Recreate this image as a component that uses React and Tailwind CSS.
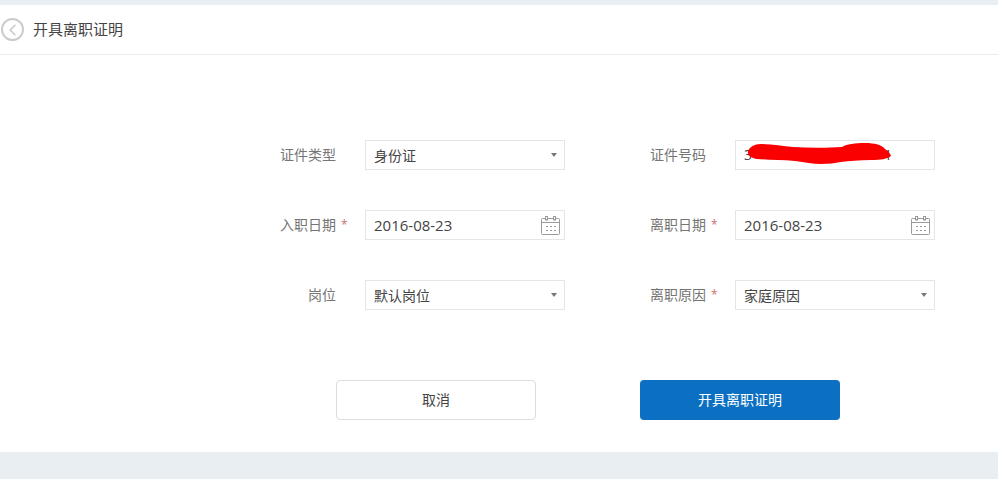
import { ChevronLeft } from 'lucide-react';

const font = { fontFamily: '"Open Sans", "Noto Sans CJK SC", sans-serif' };

function Label({ text, required }) {
  return (
    <div className="flex w-[85px] shrink-0 items-center text-sm text-[#757575]">
      <span className="w-[56px] text-right">{text}</span>
      {required && <span className="ml-[5px] text-xs text-[#c9706f]">*</span>}
    </div>
  );
}

function Select({ value }) {
  return (
    <div className="flex h-[30px] w-[200px] items-center justify-between border border-[#e2e6ea] bg-white pl-2 pr-[7px] text-sm text-[#444]">
      <span className="pt-[1px]">{value}</span>
      <span className="h-0 w-0 border-x-[3.5px] border-t-[4px] border-x-transparent border-t-[#777]" />
    </div>
  );
}

function CalendarIcon() {
  return (
    <svg width="19" height="19" viewBox="0 0 19 19" fill="none" stroke="#9a9a9a" strokeWidth="1">
      <path d="M4 2.5H1.5a1 1 0 0 0-1 1v14a1 1 0 0 0 1 1h16a1 1 0 0 0 1-1v-14a1 1 0 0 0-1-1H15" />
      <path d="M6.5 2.5h6M.5 6.5h18" />
      <rect x="4.5" y="0.5" width="2" height="3.5" />
      <rect x="12.5" y="0.5" width="2" height="3.5" />
      <path d="M5 10.5h2M9 10.5h2M13 10.5h2M5 14.5h2M9 14.5h2M13 14.5h2" />
    </svg>
  );
}

function DateInput({ value }) {
  return (
    <div className="flex h-[30px] w-[200px] items-center justify-between border border-[#e2e6ea] bg-white pl-2 pr-[4px] text-[15px] text-[#444]">
      <span className="pt-[1px]">{value}</span>
      <CalendarIcon />
    </div>
  );
}

function IdInput() {
  return (
    <div className="relative flex h-[30px] w-[200px] items-center justify-between border border-[#e2e6ea] bg-white pl-2 pr-[42px] text-sm text-[#444]">
      <span>3</span>
      <span>1</span>
      {/* red scribble over the number */}
      <svg className="absolute left-[11px] top-[2px]" width="146" height="21" viewBox="0 0 146 21">
        <path
          fill="#fb0000"
          d="M1 8C3 4 7 1 14 1C26 1 36 3 46 4C62 5 80 5 95 4C100 1 108 0 118 0C128 0 135 2 138 6C141 8 143 10 144 13C140 16 134 17 124 17C112 17 102 18 94 19C88 20 82 21 74 21C66 21 58 19 48 18C34 17 22 17 10 16C4 15 0 12 1 8Z"
        />
      </svg>
    </div>
  );
}

export default function App() {
  return (
    <div className="flex h-[479px] w-[998px] flex-col bg-[#e9eef2]" style={font}>
      <div className="mt-[5px] h-[447px] bg-white">
        {/* Header */}
        <div className="flex h-[50px] items-center border-b border-[#ebebeb]">
          <div className="ml-[1px] flex h-[23px] w-[23px] items-center justify-center rounded-full border-2 border-[#cccccc]">
            <ChevronLeft size={20} strokeWidth={2} color="#c8c8c8" />
          </div>
          <span className="ml-[9px] text-[15px] text-[#444]">开具离职证明</span>
        </div>

        {/* Form */}
        <div className="grid grid-cols-[285px_285px] gap-x-[85px] gap-y-[40px] pl-[280px] pt-[85px]">
          <div className="flex">
            <Label text="证件类型" />
            <Select value="身份证" />
          </div>
          <div className="flex">
            <Label text="证件号码" />
            <IdInput />
          </div>
          <div className="flex">
            <Label text="入职日期" required />
            <DateInput value="2016-08-23" />
          </div>
          <div className="flex">
            <Label text="离职日期" required />
            <DateInput value="2016-08-23" />
          </div>
          <div className="flex">
            <Label text="岗位" />
            <Select value="默认岗位" />
          </div>
          <div className="flex">
            <Label text="离职原因" required />
            <Select value="家庭原因" />
          </div>
        </div>

        {/* Actions */}
        <div className="mt-[70px] flex gap-[104px] pl-[336px]">
          <button className="h-[40px] w-[200px] rounded border border-[#dddddd] bg-white text-sm text-[#444]">
            取消
          </button>
          <button className="h-[40px] w-[200px] rounded bg-[#0c70c2] text-sm text-white">
            开具离职证明
          </button>
        </div>
      </div>
    </div>
  );
}
